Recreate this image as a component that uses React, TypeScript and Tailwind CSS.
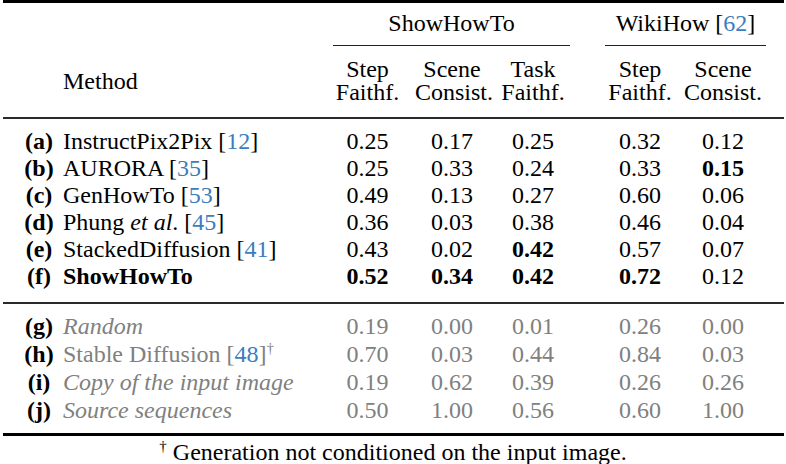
import React from "react"

const cols = "grid grid-cols-[15px_42px_260px_95px_74px_88px_23px_80px_86px]"

type Cell = { v: string; b?: boolean }

const top: { label: string; name: React.ReactNode; values: Cell[] }[] = [
  {
    label: "(a)",
    name: (
      <>
        InstructPix2Pix [<span className="text-[#3b7dbd]">12</span>]
      </>
    ),
    values: [{ v: "0.25" }, { v: "0.17" }, { v: "0.25" }, { v: "0.32" }, { v: "0.12" }],
  },
  {
    label: "(b)",
    name: (
      <>
        AURORA [<span className="text-[#3b7dbd]">35</span>]
      </>
    ),
    values: [{ v: "0.25" }, { v: "0.33" }, { v: "0.24" }, { v: "0.33" }, { v: "0.15", b: true }],
  },
  {
    label: "(c)",
    name: (
      <>
        GenHowTo [<span className="text-[#3b7dbd]">53</span>]
      </>
    ),
    values: [{ v: "0.49" }, { v: "0.13" }, { v: "0.27" }, { v: "0.60" }, { v: "0.06" }],
  },
  {
    label: "(d)",
    name: (
      <>
        Phung <i>et al</i>. [<span className="text-[#3b7dbd]">45</span>]
      </>
    ),
    values: [{ v: "0.36" }, { v: "0.03" }, { v: "0.38" }, { v: "0.46" }, { v: "0.04" }],
  },
  {
    label: "(e)",
    name: (
      <>
        StackedDiffusion [<span className="text-[#3b7dbd]">41</span>]
      </>
    ),
    values: [{ v: "0.43" }, { v: "0.02" }, { v: "0.42", b: true }, { v: "0.57" }, { v: "0.07" }],
  },
  {
    label: "(f)",
    name: <b>ShowHowTo</b>,
    values: [
      { v: "0.52", b: true },
      { v: "0.34", b: true },
      { v: "0.42", b: true },
      { v: "0.72", b: true },
      { v: "0.12" },
    ],
  },
]

const bottom: { label: string; name: React.ReactNode; values: string[] }[] = [
  { label: "(g)", name: <i>Random</i>, values: ["0.19", "0.00", "0.01", "0.26", "0.00"] },
  {
    label: "(h)",
    name: (
      <>
        Stable Diffusion [<span className="text-[#3b7dbd]">48</span>]
        <span className="relative -top-[9px] text-[15px] leading-none">†</span>
      </>
    ),
    values: ["0.70", "0.03", "0.44", "0.84", "0.03"],
  },
  { label: "(i)", name: <i>Copy of the input image</i>, values: ["0.19", "0.62", "0.39", "0.26", "0.26"] },
  { label: "(j)", name: <i>Source sequences</i>, values: ["0.50", "1.00", "0.56", "0.60", "1.00"] },
]

function Values({ values }: { values: Cell[] }) {
  return (
    <>
      {values.slice(0, 3).map((c, i) => (
        <div key={i} className={`text-center ${c.b ? "font-bold" : ""}`}>
          {c.v}
        </div>
      ))}
      <div />
      {values.slice(3).map((c, i) => (
        <div key={i + 3} className={`text-center ${c.b ? "font-bold" : ""}`}>
          {c.v}
        </div>
      ))}
    </>
  )
}

function Head({ a, b }: { a: string; b: string }) {
  return (
    <div className="text-center leading-[23px]">
      <div>{a}</div>
      <div>{b}</div>
    </div>
  )
}

export default function App() {
  return (
    <div className="h-[464px] w-[786px] overflow-hidden bg-white font-['Liberation_Serif'] text-[24px] text-black">
      <div className="ml-[3px] w-[781px]">
        <div className="h-[3px] bg-black" />

        <div className={`${cols} pt-[7px]`}>
          <div className="col-span-3" />
          <div className="col-span-3 ml-[13px] mr-[7px]">
            <div className="text-center leading-[27px]">ShowHowTo</div>
            <div className="mt-[8px] h-px bg-[#222]" />
          </div>
          <div />
          <div className="col-span-2 ml-[5px]">
            <div className="text-center leading-[27px]">
              WikiHow [<span className="text-[#3b7dbd]">62</span>]
            </div>
            <div className="mt-[8px] h-px bg-[#222]" />
          </div>
        </div>

        <div className={`${cols} mt-[12px]`}>
          <div />
          <div />
          <div className="flex items-center pl-[3px]">Method</div>
          <Head a="Step" b="Faithf." />
          <Head a="Scene" b="Consist." />
          <Head a="Task" b="Faithf." />
          <div />
          <Head a="Step" b="Faithf." />
          <Head a="Scene" b="Consist." />
        </div>

        <div className="mt-[13px] h-[2px] bg-[#2a2a2a]" />

        <div className="pt-[9px]">
          {top.map((r) => (
            <div key={r.label} className={`${cols} leading-[27px]`}>
              <div />
              <div className="text-center font-bold">{r.label}</div>
              <div className="whitespace-nowrap pl-[3px]">{r.name}</div>
              <Values values={r.values} />
            </div>
          ))}
        </div>

        <div className="mt-[12px] h-[2px] bg-[#2a2a2a]" />

        <div className="mt-[8px]">
          {bottom.map((r) => (
            <div key={r.label} className={`${cols} leading-[28px] text-[#808080]`}>
              <div />
              <div className="text-center font-bold text-black">{r.label}</div>
              <div className="whitespace-nowrap pl-[3px]">{r.name}</div>
              <Values values={r.values.map((v) => ({ v }))} />
            </div>
          ))}
        </div>

        <div className="mt-[9px] h-[3px] bg-black" />
      </div>

      <p className="pt-[4px] text-center leading-[24px]">
        <span className="relative -top-[9px] text-[15px] leading-none">†</span> Generation not conditioned on the input
        image.
      </p>
    </div>
  )
}
